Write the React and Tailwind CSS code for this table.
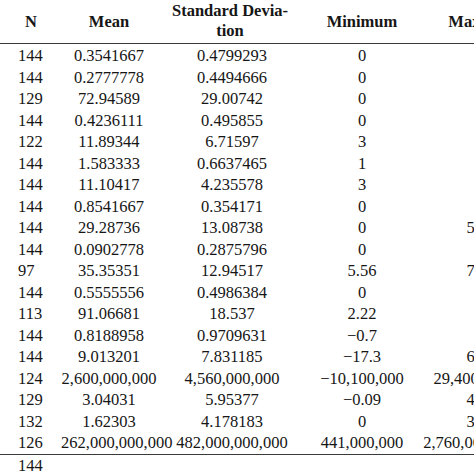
import React from 'react'

const rows = [
  ['144', '0.3541667', '0.4799293', '0', '1'],
  ['144', '0.2777778', '0.4494666', '0', '1'],
  ['129', '72.94589', '29.00742', '0', '100'],
  ['144', '0.4236111', '0.495855', '0', '1'],
  ['122', '11.89344', '6.71597', '3', '36'],
  ['144', '1.583333', '0.6637465', '1', '3'],
  ['144', '11.10417', '4.235578', '3', '24'],
  ['144', '0.8541667', '0.354171', '0', '1'],
  ['144', '29.28736', '13.08738', '0', '57.14'],
  ['144', '0.0902778', '0.2875796', '0', '1'],
  ['97', '35.35351', '12.94517', '5.56', '76.92'],
  ['144', '0.5555556', '0.4986384', '0', '1'],
  ['113', '91.06681', '18.537', '2.22', '100'],
  ['144', '0.8188958', '0.9709631', '\u22120.7', '4'],
  ['144', '9.013201', '7.831185', '\u221217.3', '63.42'],
  ['124', '2,600,000,000', '4,560,000,000', '\u221210,100,000', '29,400,000,000'],
  ['129', '3.04031', '5.95377', '\u22120.09', '41.82'],
  ['132', '1.62303', '4.178183', '0', '34.19'],
  ['126', '262,000,000,000', '482,000,000,000', '441,000,000', '2,760,000,000,000'],
]

const cols = 'grid grid-cols-[61px_96px_150px_110px_136px] w-[553px]'

export default function App() {
  return (
    <div className="w-[474px] h-[474px] overflow-hidden bg-white text-[#161616] text-[16.5px]"
      style={{ fontFamily: '"Liberation Serif", "Times New Roman", serif' }}>
      {/* header */}
      <div className={`${cols} h-[43px] items-center font-bold leading-[20px] text-center`}>
        <div className="pl-[1px]">N</div>
        <div>Mean</div>
        <div className="-ml-[4px] pb-[1px]">Standard Devia-<br />tion</div>
        <div>Minimum</div>
        <div>Maximum</div>
      </div>
      <div className="h-px w-full bg-[#3a3a3a]" />

      {/* body */}
      <div className="leading-[21.5px] pt-[1px]">
        {rows.map((r, i) => (
          <div key={i} className={`${cols} text-center`}>
            <div className="text-left pl-[18px]">{r[0]}</div>
            <div>{r[1]}</div>
            <div>{r[2]}</div>
            <div>{r[3]}</div>
            <div>{r[4]}</div>
          </div>
        ))}
      </div>
      <div className="h-[1.5px] w-full bg-[#3a3a3a]" />
      <div className={`${cols} leading-[22px]`}>
        <div className="pl-[18px]">144</div>
      </div>
    </div>
  )
}
